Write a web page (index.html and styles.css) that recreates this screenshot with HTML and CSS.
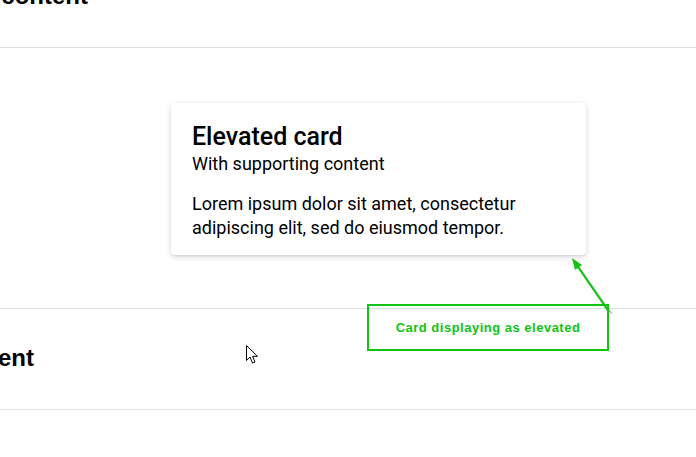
FILE: index.html
```html
<!DOCTYPE html>
<html>
<head>
<meta charset="utf-8">
<link rel="stylesheet" href="styles.css">
</head>
<body>
<div class="page">
  <section class="head-row top">
    <div class="heading-wrap"><h2 class="heading heading-top">Elevated card with content</h2></div>
  </section>
  <section class="demo">
    <div class="card">
      <h3 class="card-title">Elevated card</h3>
      <p class="card-sub">With supporting content</p>
      <p class="card-body">Lorem ipsum dolor sit amet, consectetur adipiscing elit, sed do eiusmod tempor.</p>
    </div>
  </section>
  <section class="head-row bottom">
    <div class="heading-wrap short"><h2 class="heading heading-bottom">Outlined card with content</h2></div>
  </section>
</div>
<svg class="arrow" width="60" height="70" viewBox="0 0 60 70">
  <line x1="42" y1="58" x2="8" y2="10" stroke="#c8c8c8" stroke-width="2"/>
  <line x1="39" y1="56" x2="6" y2="8" stroke="#11c411" stroke-width="2"/>
  <polygon points="2,2 12,9 5,14" fill="#11c411"/>
</svg>
<div class="note">Card displaying as elevated</div>
<svg class="cursor" width="14" height="20" viewBox="0 0 14 20">
  <path d="M0.5 0.5 L0.5 15.5 L4 12 L6.5 18 L9 17 L6.6 11.3 L11.5 11.3 Z" fill="#fff" stroke="#000" stroke-width="1" stroke-linejoin="miter"/>
</svg>
</body>
</html>
```
FILE: styles.css
```css
html, body {
  margin: 0;
  padding: 0;
  background: #fff;
  overflow: hidden;
}
.page {
  width: 696px;
  overflow: hidden;
}
.head-row {
  display: flex;
  border-bottom: 1px solid #dedede;
}
.head-row.top {
  height: 47px;
  align-items: flex-start;
}
.head-row.bottom {
  height: 100px;
  align-items: center;
  border-top: 1px solid #dedede;
}
.heading-wrap {
  width: 88px;
  display: flex;
  justify-content: flex-end;
}
.heading-wrap.short {
  width: 34px;
}
.heading {
  margin: 0;
  font-family: "Liberation Sans", Arial, sans-serif;
  font-weight: bold;
  font-size: 24px;
  color: #000;
  white-space: nowrap;
  flex-shrink: 0;
}
.heading-top {
  margin-top: -18px;
}
.heading-bottom {
  margin-top: -3px;
}
.demo {
  height: 260px;
  display: flex;
  align-items: flex-start;
  padding-left: 171px;
  padding-top: 55px;
  box-sizing: border-box;
}
.card {
  width: 415px;
  box-sizing: border-box;
  padding: 19px 21px 15px;
  background: #fff;
  border-radius: 4px;
  box-shadow: 0 2px 6px rgba(0,0,0,0.14), 0 1px 2px rgba(0,0,0,0.08);
  font-family: Roboto, "Noto Sans", sans-serif;
  color: #000;
}
.card-title {
  margin: 0;
  font-size: 25px;
  font-weight: 500;
  line-height: 30px;
}
.card-sub {
  margin: 0;
  font-size: 18px;
  line-height: 24px;
}
.card-body {
  margin: 16px 0 0;
  font-size: 18px;
  line-height: 24px;
}
.note {
  position: absolute;
  left: 367px;
  top: 304px;
  width: 242px;
  height: 47px;
  box-sizing: border-box;
  border: 2px solid #11c411;
  display: flex;
  align-items: center;
  justify-content: center;
  font-family: "Liberation Sans", Arial, sans-serif;
  font-weight: bold;
  font-size: 13px;
  letter-spacing: 0.5px;
  color: #11c411;
}
.arrow {
  position: absolute;
  left: 570px;
  top: 256px;
}
.cursor {
  position: absolute;
  left: 246px;
  top: 345px;
}
```
